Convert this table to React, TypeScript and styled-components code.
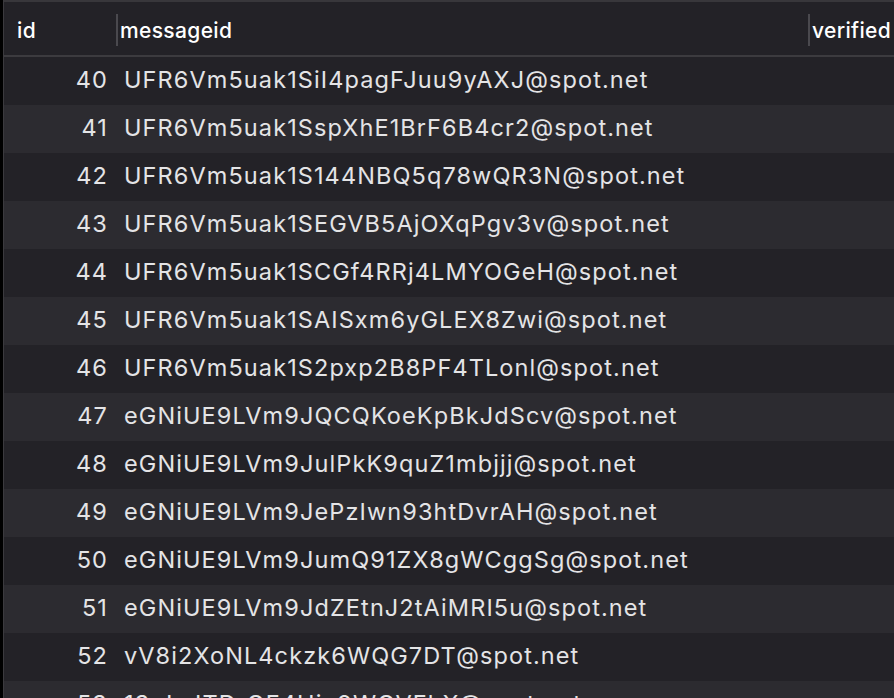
import React from "react";
import styled, { createGlobalStyle } from "styled-components";

const GlobalStyle = createGlobalStyle`
  html, body {
    margin: 0;
    padding: 0;
    background: #232227;
    overflow: hidden;
  }
  * {
    box-sizing: border-box;
  }
`;

const Frame = styled.div`
  display: flex;
  width: 894px;
  height: 698px;
  overflow: hidden;
  background: #232227;
  font-family: Inter, "Noto Sans", "Liberation Sans", sans-serif;
`;

const LeftEdge = styled.div`
  flex: 0 0 4px;
  border-left: 3px solid #000000;
  border-right: 1px solid #3b3a3e;
`;

const Table = styled.div`
  flex: 1;
  display: flex;
  flex-direction: column;
  border-top: 2px solid #38373b;
`;

const HeaderRow = styled.div`
  display: grid;
  grid-template-columns: 112px 692px 1fr;
  flex: 0 0 55px;
  align-items: center;
  padding-top: 3px;
  border-bottom: 2px solid #3c3b3f;
  background: #232227;
`;

const HeaderCell = styled.div<{ $divider?: boolean }>`
  height: 32px;
  display: flex;
  align-items: center;
  padding-left: ${(p) => (p.$divider ? "2px" : "13px")};
  border-left: ${(p) => (p.$divider ? "2px solid #4a494e" : "none")};
  color: #ffffff;
  font-size: 21px;
  font-weight: 500;
  letter-spacing: 0.35px;
  white-space: nowrap;
  overflow: hidden;
`;

const Row = styled.div<{ $alt: boolean }>`
  display: grid;
  grid-template-columns: 112px 692px 1fr;
  flex: 0 0 48px;
  align-items: center;
  padding-bottom: 3px;
  background: ${(p) => (p.$alt ? "#2c2b30" : "#232227")};
  color: #e4e4e6;
  font-size: 23.5px;
  letter-spacing: 1.1px;
`;

const IdCell = styled.div`
  text-align: right;
  padding-right: 8px;
`;

const MessageCell = styled.div`
  padding-left: 8px;
  white-space: nowrap;
`;

const rows: [number, string][] = [
  [40, "UFR6Vm5uak1SiI4pagFJuu9yAXJ@spot.net"],
  [41, "UFR6Vm5uak1SspXhE1BrF6B4cr2@spot.net"],
  [42, "UFR6Vm5uak1S144NBQ5q78wQR3N@spot.net"],
  [43, "UFR6Vm5uak1SEGVB5AjOXqPgv3v@spot.net"],
  [44, "UFR6Vm5uak1SCGf4RRj4LMYOGeH@spot.net"],
  [45, "UFR6Vm5uak1SAISxm6yGLEX8Zwi@spot.net"],
  [46, "UFR6Vm5uak1S2pxp2B8PF4TLonl@spot.net"],
  [47, "eGNiUE9LVm9JQCQKoeKpBkJdScv@spot.net"],
  [48, "eGNiUE9LVm9JulPkK9quZ1mbjjj@spot.net"],
  [49, "eGNiUE9LVm9JePzIwn93htDvrAH@spot.net"],
  [50, "eGNiUE9LVm9JumQ91ZX8gWCggSg@spot.net"],
  [51, "eGNiUE9LVm9JdZEtnJ2tAiMRI5u@spot.net"],
  [52, "vV8i2XoNL4ckzk6WQG7DT@spot.net"],
  [53, "13rJmITDrQF4Hie9WQVFbX@spot.net"],
];

export default function App() {
  return (
    <>
      <GlobalStyle />
      <Frame>
        <LeftEdge />
        <Table>
          <HeaderRow>
            <HeaderCell>id</HeaderCell>
            <HeaderCell $divider>messageid</HeaderCell>
            <HeaderCell $divider>verified</HeaderCell>
          </HeaderRow>
          {rows.map(([id, msg], i) => (
            <Row key={id} $alt={i % 2 === 1}>
              <IdCell>{id}</IdCell>
              <MessageCell>{msg}</MessageCell>
              <div />
            </Row>
          ))}
        </Table>
      </Frame>
    </>
  );
}
